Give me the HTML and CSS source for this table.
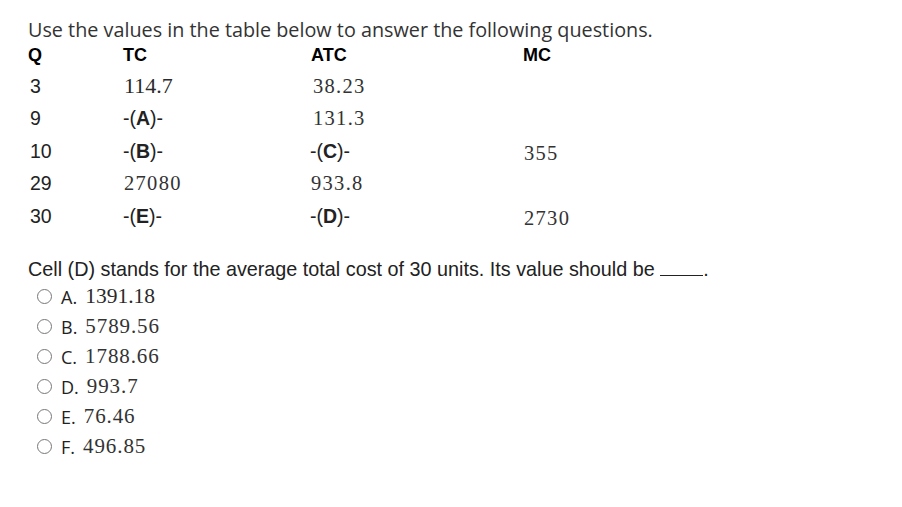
FILE: index.html
```html
<!DOCTYPE html>
<html>
<head>
<meta charset="utf-8">
<link rel="stylesheet" href="styles.css">
</head>
<body>
<div class="page">
  <p class="intro">Use the values in the table below to answer the following questions.</p>
  <div class="grid">
    <div class="hd">Q</div><div class="hd">TC</div><div class="hd atc">ATC</div><div class="hd">MC</div>

    <div class="q">3</div><div class="num">114.7</div><div class="num alt atc">38.23</div><div></div>

    <div class="q">9</div><div class="ph">-(<b>A</b>)-</div><div class="num alt atc">131.3</div><div></div>

    <div class="q">10</div><div class="ph">-(<b>B</b>)-</div><div class="ph">-(<b>C</b>)-</div><div class="num alt low">355</div>

    <div class="q">29</div><div class="num alt">27080</div><div class="num alt">933.8</div><div></div>

    <div class="q">30</div><div class="ph">-(<b>E</b>)-</div><div class="ph">-(<b>D</b>)-</div><div class="num alt low">2730</div>
  </div>

  <p class="question">Cell (D) stands for the average total cost of 30 units. Its value should be <span class="blank"></span>.</p>

  <ul class="options">
    <li><span class="radio"></span><span class="lbl">A.</span><span class="val">1391.18</span></li>
    <li><span class="radio"></span><span class="lbl">B.</span><span class="val alt">5789.56</span></li>
    <li><span class="radio"></span><span class="lbl">C.</span><span class="val alt">1788.66</span></li>
    <li><span class="radio"></span><span class="lbl">D.</span><span class="val alt">993.7</span></li>
    <li><span class="radio"></span><span class="lbl">E.</span><span class="val alt">76.46</span></li>
    <li><span class="radio"></span><span class="lbl">F.</span><span class="val alt">496.85</span></li>
  </ul>
</div>
</body>
</html>
```

FILE: styles.css
```css
html, body {
  margin: 0;
  padding: 0;
  background: #ffffff;
}

.page {
  padding: 18px 0 0 28px;
  color: #222;
}

.intro {
  margin: 0;
  font-family: "Open Sans", sans-serif;
  font-size: 19.8px;
  line-height: 24px;
  color: #333;
}

.grid {
  display: grid;
  grid-template-columns: 95px 187px 213px 120px;
  grid-template-rows: 28px;
  grid-auto-rows: 32.5px;
  align-items: center;
  font-family: "Liberation Sans", Arial, sans-serif;
  font-size: 19.5px;
  color: #222;
}

.grid .hd {
  font-weight: bold;
  font-size: 18px;
  color: #000;
  height: 26px;
  line-height: 26px;
  align-self: start;
}

.grid .hd.atc { padding-left: 1px; }

.q { padding-left: 2px; }

.num {
  font-family: "Liberation Serif", "Times New Roman", serif;
  font-size: 22px;
  color: #2a2a2a;
  padding-left: 1px;
}

.num.alt {
  font-size: 20.5px;
  letter-spacing: 1.3px;
  color: #333;
}

.atc { padding-left: 3px; }

.low { padding-top: 4px; }

.ph b { font-weight: bold; }

.question {
  margin: 24px 0 0 0;
  font-family: "Liberation Sans", Arial, sans-serif;
  font-size: 19.8px;
  line-height: 24px;
  color: #222;
}

.blank {
  display: inline-block;
  width: 43px;
  border-bottom: 1.5px solid #222;
  margin-left: 0;
  vertical-align: baseline;
}

.options {
  list-style: none;
  margin: 0;
  padding: 1px 0 0 9px;
}

.options li {
  display: flex;
  align-items: center;
  height: 30px;
}

.radio {
  width: 13px;
  height: 13px;
  border: 1.5px solid #777;
  border-radius: 50%;
  margin-right: 9px;
  flex: none;
}

.lbl {
  font-family: "Open Sans", sans-serif;
  font-size: 18px;
  color: #222;
  margin-right: 8px;
}

.val {
  font-family: "Liberation Serif", "Times New Roman", serif;
  font-size: 21.5px;
  color: #2a2a2a;
}

.val.alt {
  font-size: 21px;
  letter-spacing: 0.9px;
  color: #333;
}
```
